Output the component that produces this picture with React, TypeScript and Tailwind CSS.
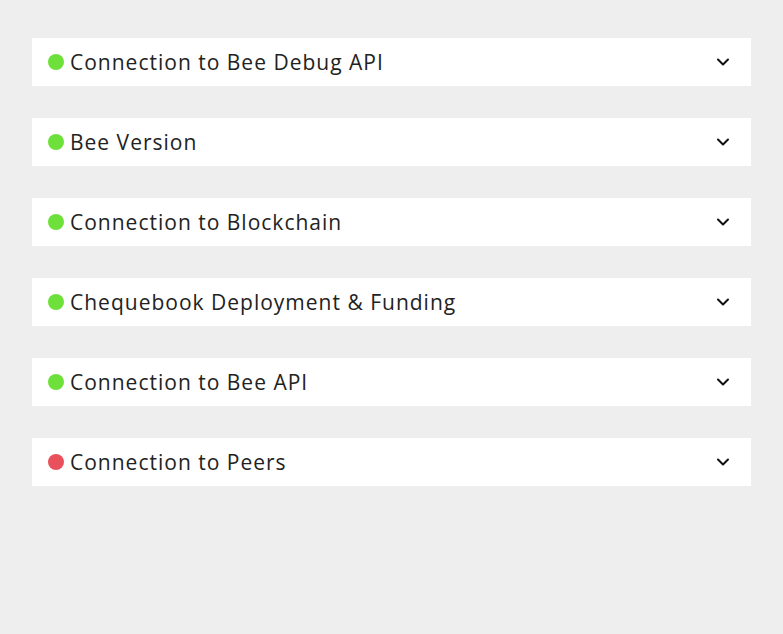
import { ChevronDown } from "lucide-react";

const checks = [
  { label: "Connection to Bee Debug API", ok: true },
  { label: "Bee Version", ok: true },
  { label: "Connection to Blockchain", ok: true },
  { label: "Chequebook Deployment & Funding", ok: true },
  { label: "Connection to Bee API", ok: true },
  { label: "Connection to Peers", ok: false },
];

export default function App() {
  return (
    <div
      className="min-h-screen bg-[#eeeeee] px-8 pt-[38px]"
      style={{ fontFamily: '"Open Sans", sans-serif' }}
    >
      <div className="flex flex-col gap-8">
        {checks.map((c) => (
          <div key={c.label} className="flex h-12 items-center justify-between bg-white pl-4 pr-[18px]">
            <div className="flex items-center gap-1.5">
              <span className={`h-4 w-4 rounded-full ${c.ok ? "bg-[#6ee03a]" : "bg-[#e8505b]"}`} />
              <span className="mt-0.5 text-[21px] tracking-[1px] text-[#222222]">{c.label}</span>
            </div>
            <ChevronDown size={20} strokeWidth={2.4} className="text-[#111111]" />
          </div>
        ))}
      </div>
    </div>
  );
}
